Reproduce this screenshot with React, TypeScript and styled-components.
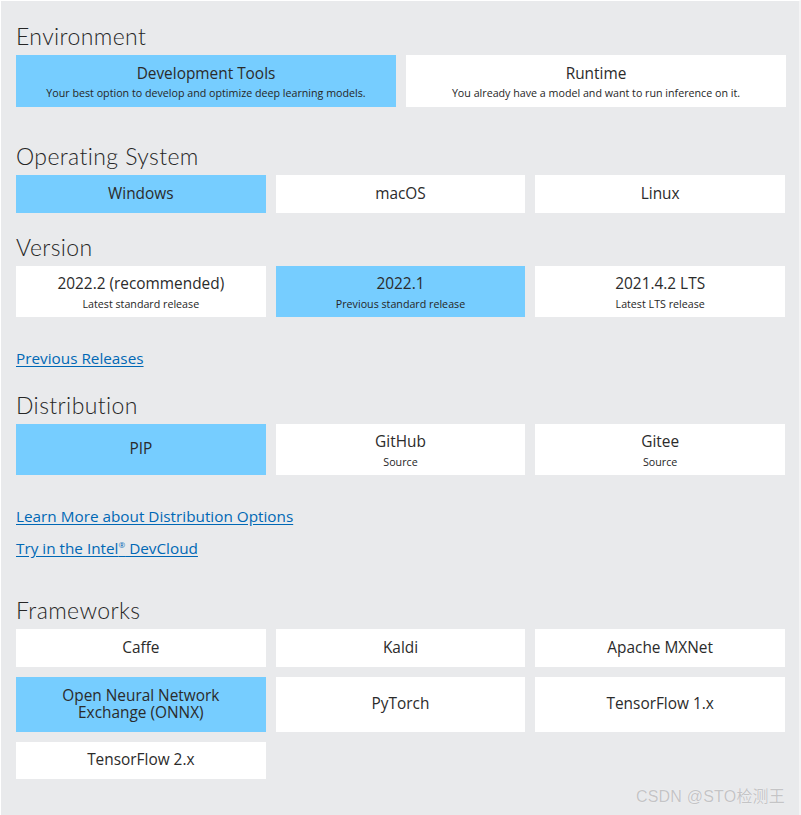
import React from "react";
import styled, { createGlobalStyle } from "styled-components";

const Global = createGlobalStyle`
  html, body { margin: 0; padding: 0; background: #ffffff; }
  #root { width: 801px; }
`;

const Page = styled.div`
  position: relative;
  box-sizing: border-box;
  width: 801px;
  height: 815px;
  background: #e9eaec;
  border-left: 1px solid #ffffff;
  border-top: 1px solid #ffffff;
  border-right: 2px solid #f4f4f5;
  padding: 22px 14px 0 15px;
  font-family: "Open Sans", "Noto Sans", sans-serif;
  color: #262626;
  overflow: hidden;
`;

const Heading = styled.h2<{ $top: number }>`
  margin: ${(p) => p.$top}px 0 6px 0;
  font-family: "Lato", "Open Sans", sans-serif;
  font-weight: 300;
  font-size: 23px;
  line-height: 26px;
  color: #262626;
  letter-spacing: 0.4px;
`;

const Grid = styled.div<{ $cols: number }>`
  display: grid;
  grid-template-columns: repeat(${(p) => p.$cols}, 1fr);
  gap: 10px;
  width: ${(p) => (p.$cols === 3 ? 769 : 770)}px;
`;

const Option = styled.div<{ $active?: boolean; $h: number; $withSub?: boolean }>`
  height: ${(p) => p.$h}px;
  background: ${(p) => (p.$active ? "#76cdff" : "#ffffff")};
  display: flex;
  flex-direction: column;
  align-items: center;
  justify-content: center;
  text-align: center;
  box-sizing: border-box;
  padding-top: ${(p) => (p.$withSub ? 3 : 0)}px;
  padding-bottom: ${(p) => (p.$withSub ? 0 : 1)}px;
`;

const Title = styled.div`
  font-size: 15.4px;
  line-height: 17.5px;
  color: #2b2b2b;
`;

const Sub = styled.div`
  font-size: 10.7px;
  line-height: 14px;
  margin-top: 4px;
  color: #262626;
`;

const Link = styled.a<{ $top: number }>`
  display: block;
  width: max-content;
  margin-top: ${(p) => p.$top}px;
  font-size: 15.3px;
  line-height: 20px;
  color: #0068b5;
  text-decoration: underline;
  text-underline-offset: 2px;
  cursor: pointer;
`;

const Reg = styled.sup`
  font-size: 8px;
`;

const Watermark = styled.div`
  position: absolute;
  right: 14px;
  bottom: 8px;
  font-family: "Liberation Sans", "Noto Sans CJK SC", sans-serif;
  font-size: 16px;
  color: #c4c4c6;
  text-shadow: 0 0 1px #ffffff;
  letter-spacing: 0.2px;
`;

type Opt = { title: string; sub?: string; active?: boolean };

const Row = ({ cols, h, items }: { cols: number; h: number; items: Opt[] }) => (
  <Grid $cols={cols}>
    {items.map((o) => (
      <Option key={o.title} $active={o.active} $h={h} $withSub={!!o.sub}>
        <Title>{o.title}</Title>
        {o.sub && <Sub>{o.sub}</Sub>}
      </Option>
    ))}
  </Grid>
);

export default function App() {
  return (
    <>
      <Global />
      <Page>
        <Heading $top={0}>Environment</Heading>
        <Row
          cols={2}
          h={52}
          items={[
            {
              title: "Development Tools",
              sub: "Your best option to develop and optimize deep learning models.",
              active: true,
            },
            { title: "Runtime", sub: "You already have a model and want to run inference on it." },
          ]}
        />

        <Heading $top={36}>Operating System</Heading>
        <Row
          cols={3}
          h={38}
          items={[{ title: "Windows", active: true }, { title: "macOS" }, { title: "Linux" }]}
        />

        <Heading $top={21}>Version</Heading>
        <Row
          cols={3}
          h={51}
          items={[
            { title: "2022.2 (recommended)", sub: "Latest standard release" },
            { title: "2022.1", sub: "Previous standard release", active: true },
            { title: "2021.4.2 LTS", sub: "Latest LTS release" },
          ]}
        />

        <Link $top={31}>Previous Releases</Link>

        <Heading $top={24}>Distribution</Heading>
        <Row
          cols={3}
          h={51}
          items={[
            { title: "PIP", active: true },
            { title: "GitHub", sub: "Source" },
            { title: "Gitee", sub: "Source" },
          ]}
        />

        <Link $top={31}>Learn More about Distribution Options</Link>
        <Link $top={9}>
          Try in the Intel<Reg>®</Reg> DevCloud
        </Link>

        <Heading $top={39}>Frameworks</Heading>
        <Grid $cols={3}>
          <Option $h={38}>
            <Title>Caffe</Title>
          </Option>
          <Option $h={38}>
            <Title>Kaldi</Title>
          </Option>
          <Option $h={38}>
            <Title>Apache MXNet</Title>
          </Option>
          <Option $h={55} $active>
            <Title>
              Open Neural Network
              <br />
              Exchange (ONNX)
            </Title>
          </Option>
          <Option $h={55}>
            <Title>PyTorch</Title>
          </Option>
          <Option $h={55}>
            <Title>TensorFlow 1.x</Title>
          </Option>
          <Option $h={37}>
            <Title>TensorFlow 2.x</Title>
          </Option>
        </Grid>

        <Watermark>CSDN @STO检测王</Watermark>
      </Page>
    </>
  );
}
